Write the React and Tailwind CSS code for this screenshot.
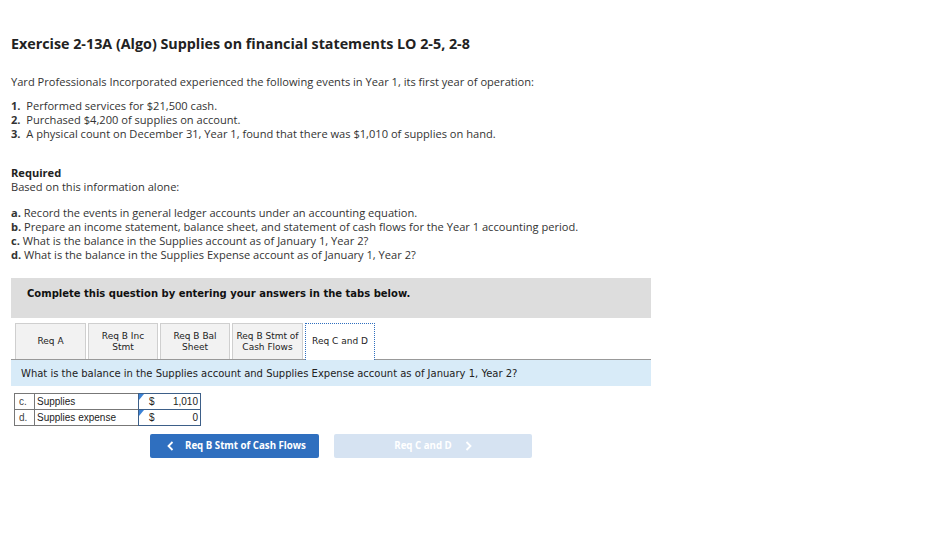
import React from "react";

const tabs = [
  { label: ["Req A"], w: "w-[71px]" },
  { label: ["Req B Inc", "Stmt"], w: "w-[70px]" },
  { label: ["Req B Bal", "Sheet"], w: "w-[70px]" },
  { label: ["Req B Stmt of", "Cash Flows"], w: "w-[71px]" },
];

function Flag() {
  return (
    <span className="absolute left-0 top-0 w-0 h-0 border-t-[6px] border-t-[#3b82d6] border-r-[5px] border-r-transparent" />
  );
}

function AnswerRow({ letter, name, value }) {
  return (
    <div className="flex h-[17px] text-[10px] text-[#222]">
      <div className="w-[21px] border border-[#777] pl-[4px] leading-[15px] text-[#444]">{letter}</div>
      <div className="w-[103px] border-y border-[#777] pl-[2px] leading-[15px]">{name}</div>
      <div className="relative w-[63px] border border-[#3d5f88] flex justify-between pl-[10px] pr-[2px] leading-[15px]">
        <Flag />
        <span>$</span>
        <span>{value}</span>
      </div>
    </div>
  );
}

export default function App() {
  return (
    <div className="w-[939px] h-[543px] bg-white pl-[11px] pt-[35px] font-['Open_Sans',sans-serif] text-[#333]">
      <h1 className="text-[14.3px] font-bold text-[#222] leading-[18px]">
        Exercise 2-13A (Algo) Supplies on financial statements LO 2-5, 2-8
      </h1>

      <div className="mt-[22px] text-[11.1px] leading-[14px]">
        <p>Yard Professionals Incorporated experienced the following events in Year 1, its first year of operation:</p>
        <ol className="mt-[10px]">
          <li><b>1.</b>&nbsp; Performed services for $21,500 cash.</li>
          <li><b>2.</b>&nbsp; Purchased $4,200 of supplies on account.</li>
          <li><b>3.</b>&nbsp; A physical count on December 31, Year 1, found that there was $1,010 of supplies on hand.</li>
        </ol>

        <p className="mt-[25px] font-bold text-[#222]">Required</p>
        <p>Based on this information alone:</p>

        <div className="mt-[12px]">
          <p><b>a.</b> Record the events in general ledger accounts under an accounting equation.</p>
          <p><b>b.</b> Prepare an income statement, balance sheet, and statement of cash flows for the Year 1 accounting period.</p>
          <p><b>c.</b> What is the balance in the Supplies account as of January 1, Year 2?</p>
          <p><b>d.</b> What is the balance in the Supplies Expense account as of January 1, Year 2?</p>
        </div>
      </div>

      <div className="mt-[16px] w-[640px] h-[40px] bg-[#dddddd] pl-[16px] pt-[9px] font-['DejaVu_Sans',sans-serif] text-[10px] leading-[14px] font-bold text-[#111]">
        Complete this question by entering your answers in the tabs below.
      </div>

      <div className="w-[640px] mt-[5px] font-['DejaVu_Sans',sans-serif] text-[9px] text-[#222]">
        <div className="flex gap-[2px] pl-[4px] border-b border-[#999]">
          {tabs.map((t) => (
            <div
              key={t.label[0]}
              className={`${t.w} h-[36px] bg-[#f2f2f2] border border-b-0 border-[#cfcfcf] flex flex-col items-center justify-center leading-[11px] text-center`}
            >
              {t.label.map((l) => (
                <span key={l}>{l}</span>
              ))}
            </div>
          ))}
          <div className="w-[70px] h-[37px] -mb-px bg-white border border-dotted border-b-0 border-[#2f6fbf] flex items-center justify-center">
            Req C and D
          </div>
        </div>
        <div className="h-[26px] bg-[#d8ebf8] pl-[10px] flex items-center text-[10px]">
          What is the balance in the Supplies account and Supplies Expense account as of January 1, Year 2?
        </div>
      </div>

      <div className="mt-[7px] ml-[3px] font-['Liberation_Sans',sans-serif]">
        <AnswerRow letter="c." name="Supplies" value="1,010" />
        <div className="-mt-px">
          <AnswerRow letter="d." name="Supplies expense" value="0" />
        </div>
      </div>

      <div className="mt-[8px] ml-[139px] flex gap-[15px] text-[9.7px] font-bold text-white">
        <button className="w-[169px] h-[24px] rounded-[2px] bg-[#2f6fbf] flex items-center pl-[17px] gap-[11px]">
          <svg width="7" height="10" viewBox="0 0 7 10"><path d="M5.5 1 L1.5 5 L5.5 9" stroke="white" strokeWidth="1.8" fill="none" /></svg>
          <span>Req B Stmt of Cash Flows</span>
        </button>
        <button className="w-[198px] h-[24px] rounded-[2px] bg-[#d6e3f2] flex items-center justify-center gap-[13px]">
          <span>Req C and D</span>
          <svg width="7" height="10" viewBox="0 0 7 10"><path d="M1.5 1 L5.5 5 L1.5 9" stroke="white" strokeWidth="1.8" fill="none" /></svg>
        </button>
      </div>
    </div>
  );
}
